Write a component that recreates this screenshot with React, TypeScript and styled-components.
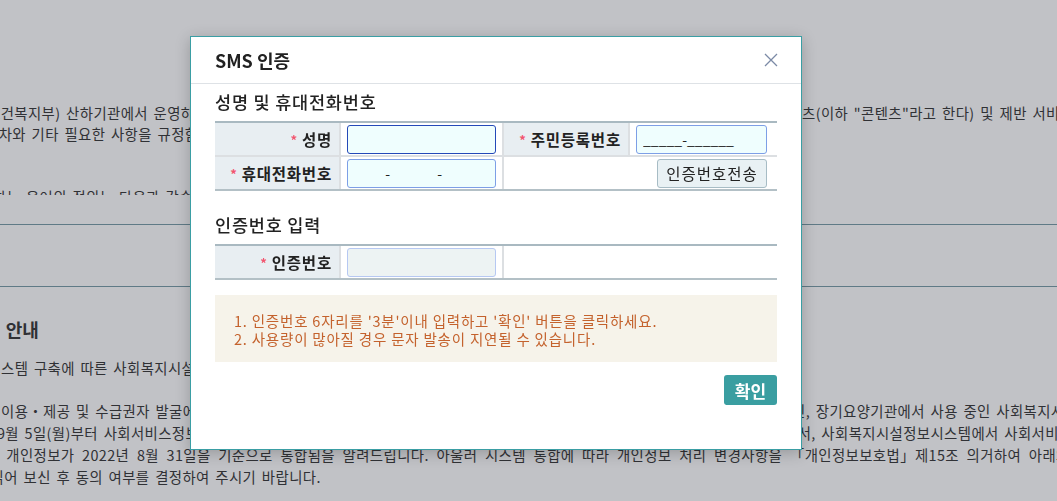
import React from 'react';
import styled, { createGlobalStyle } from 'styled-components';

const GlobalStyle = createGlobalStyle`
  html, body {
    margin: 0;
    padding: 0;
    height: 100%;
    overflow: hidden;
  }
  body {
    background: #c1c2c6;
    font-family: "Noto Sans CJK KR", "Noto Sans", sans-serif;
  }
  * {
    box-sizing: border-box;
  }
`;

/* ---------- page behind the dimmed overlay ---------- */

const Page = styled.div`
  margin-left: -141px;
  width: 1600px;
  color: #303135;
  font-size: 14.4px;
  letter-spacing: 0.4px;
  word-spacing: 2px;
`;

const TermsBox = styled.div`
  height: 195px;
  overflow: hidden;
  padding-top: 102px;
`;

const TermsLine = styled.p`
  margin: 0;
  line-height: 21px;
  white-space: nowrap;
`;

const AgreeBar = styled.div`
  margin-top: 29px;
  height: 63px;
  border-top: 1px solid #5f7a86;
  border-bottom: 1px solid #5f7a86;
`;

const NoticeHeading = styled.h3`
  margin: 29px 0 0;
  font-size: 18px;
  font-weight: 700;
  line-height: 26px;
  letter-spacing: 0;
  word-spacing: 3px;
  white-space: nowrap;
`;

const BodyLine = styled.p<{ $gap?: number; $wide?: boolean }>`
  margin: ${(p) => p.$gap ?? 0}px 0 0;
  line-height: 22px;
  white-space: nowrap;
  word-spacing: ${(p) => (p.$wide ? 4 : 2)}px;
`;

/* ---------- modal ---------- */

const Modal = styled.div`
  position: fixed;
  left: 190px;
  top: 36px;
  width: 612px;
  height: 414px;
  background: #ffffff;
  border: 1px solid #3a9ea4;
  box-shadow: 0 3px 14px rgba(0, 0, 0, 0.22);
  display: flex;
  flex-direction: column;
`;

const Header = styled.div`
  height: 47px;
  flex: none;
  display: flex;
  align-items: center;
  justify-content: space-between;
  padding: 0 23px 0 24px;
  border-bottom: 1px solid #dee2e6;
`;

const Title = styled.h2`
  margin: 0;
  font-size: 18px;
  font-weight: 700;
  color: #212121;
`;

const CloseButton = styled.button`
  width: 14px;
  height: 14px;
  padding: 0;
  border: 0;
  background: none;
  display: flex;
  cursor: pointer;
`;

const Body = styled.div`
  padding: 6px 24px 0 24px;
  display: flex;
  flex-direction: column;
`;

const SectionTitle = styled.h3<{ $top?: number }>`
  margin: ${(p) => p.$top ?? 0}px 0 7px;
  font-size: 17.5px;
  font-weight: 500;
  line-height: 24px;
  letter-spacing: 0.8px;
  color: #222222;
`;

const FormGrid = styled.div<{ $cols: string }>`
  display: grid;
  grid-template-columns: ${(p) => p.$cols};
  grid-auto-rows: 32px;
  gap: 2px;
  background: #dcdfe2;
  border-top: 2px solid #a9b9c1;
  border-bottom: 2px solid #b3c0c6;
`;

const LabelCell = styled.div`
  background: #e8eef2;
  display: flex;
  align-items: center;
  justify-content: flex-end;
  padding-right: 7px;
  font-size: 15.5px;
  font-weight: 600;
  letter-spacing: 0.8px;
  color: #222222;
`;

const Star = styled.span`
  color: #f2556f;
  font-size: 13px;
  margin-right: 4px;
`;

const FieldCell = styled.div<{ $span?: number; $end?: boolean }>`
  background: #ffffff;
  display: flex;
  align-items: center;
  justify-content: ${(p) => (p.$end ? 'flex-end' : 'flex-start')};
  padding: 0 ${(p) => (p.$end ? 10 : 6)}px 0 6px;
  grid-column: span ${(p) => p.$span ?? 1};
`;

type Tone = 'focus' | 'normal' | 'disabled';

const borderFor: Record<Tone, string> = {
  focus: '#2449b8',
  normal: '#7d9fe6',
  disabled: '#b6c8f2',
};

const TextInput = styled.input<{ $w: number; $tone: Tone }>`
  width: ${(p) => p.$w}px;
  height: 29px;
  padding: 0 6px;
  border: 1px solid ${(p) => borderFor[p.$tone]};
  border-radius: 3px;
  background: ${(p) => (p.$tone === 'disabled' ? '#edf3f3' : '#effefe')};
  font-family: inherit;
  font-size: 14px;
  color: #222222;
  outline: none;
  white-space: pre;
`;

const SendButton = styled.button`
  width: 110px;
  height: 29px;
  padding: 0;
  border: 1px solid #a7bcc5;
  border-radius: 3px;
  background: #e9f1f4;
  font-family: inherit;
  font-size: 15.5px;
  letter-spacing: 1px;
  color: #222222;
`;

const NoticeBox = styled.div`
  margin-top: 15px;
  background: #f6f3ea;
  padding: 17px 19px 14px;
  color: #c4622d;
  font-size: 14.5px;
  letter-spacing: 0.8px;
  line-height: 18px;
`;

const Footer = styled.div`
  margin-top: 13px;
  display: flex;
  justify-content: flex-end;
`;

const ConfirmButton = styled.button`
  width: 53px;
  height: 30px;
  padding: 0;
  border: 0;
  border-radius: 3px;
  background: #3a9ea1;
  color: #ffffff;
  font-family: inherit;
  font-size: 17px;
  font-weight: 700;
`;

const CloseIcon = () => (
  <svg width="14" height="14" viewBox="0 0 14 14" fill="none">
    <path d="M1 1 L13 13 M13 1 L1 13" stroke="#7b8aa6" strokeWidth="1.3" />
  </svg>
);

const phoneMask = ' '.repeat(10) + '-' + ' '.repeat(15) + '-';
const nb = '\u00a0';

export default function App() {
  return (
    <>
      <GlobalStyle />
      <Page>
        <TermsBox>
          <TermsLine>
            한국사회보장정보원(보건복지부) 산하기관에서 운영하는 사회복지시설정보시스템(이하 "시스템"이라 한다)에서 제공하는 모든 서비스 및 온라인상 콘텐츠(이하 "콘텐츠"라고 한다) 및 제반 서비스의 이용과 관련하여 회원과 기관의 권리
          </TermsLine>
          <TermsLine>서비스 이용조건 및 절차와 기타 필요한 사항을 규정함을 목적으로 합니다.</TermsLine>
          <TermsLine>&nbsp;</TermsLine>
          <TermsLine>&nbsp;</TermsLine>
          <TermsLine>본 이용약관에서 사용하는 용어의 정의는 다음과 같습니다.</TermsLine>
        </TermsBox>
        <AgreeBar />
        <NoticeHeading>개인정보 변경사항 안내</NoticeHeading>
        <BodyLine $gap={15}>
          차세대 사회보장정보시스템 구축에 따른 사회복지시설정보시스템 개인정보 처리 변경사항을 안내드립니다.
        </BodyLine>
        <BodyLine $gap={21}>
          사회복지서비스정보의 이용・제공 및 수급권자 발굴에 관한 업무를 효율화하기 위해 전국의 사회복지시설, 지역아동센터, 국공립어린이집, 사회복지법인, 장기요양기관에서 사용 중인 사회복지시설정보시스템이
        </BodyLine>
        <BodyLine>
          이에 정부는{nb} 2022년 9월 5일(월)부터 사회서비스정보시스템과 사회복지시설정보시스템이 차세대 사회보장정보시스템으로 다 통합되어 운영됨에 따라서, 사회복지시설정보시스템에서 사회서비스정보시스템으로
        </BodyLine>
        <BodyLine $wide>
          시스템 등록 회원의{nb}{nb} 개인정보가 2022년 8월 31일을 기준으로 통합됨을 알려드립니다. 아울러 시스템 통합에 따라 개인정보 처리 변경사항을 「개인정보보호법」제15조 의거하여 아래와 같이 안내드리오니
        </BodyLine>
        <BodyLine>
          아래 내용을 자세히{nb} 읽어 보신 후 동의 여부를 결정하여 주시기 바랍니다.
        </BodyLine>
      </Page>

      <Modal role="dialog" aria-label="SMS 인증">
        <Header>
          <Title>SMS 인증</Title>
          <CloseButton aria-label="닫기">
            <CloseIcon />
          </CloseButton>
        </Header>
        <Body>
          <SectionTitle>성명 및 휴대전화번호</SectionTitle>
          <FormGrid $cols="124px 161px 124px 1fr">
            <LabelCell>
              <Star>*</Star>성명
            </LabelCell>
            <FieldCell>
              <TextInput $w={149} $tone="focus" defaultValue="" />
            </FieldCell>
            <LabelCell>
              <Star>*</Star>주민등록번호
            </LabelCell>
            <FieldCell>
              <TextInput $w={131} $tone="normal" defaultValue="_____-______" />
            </FieldCell>
            <LabelCell>
              <Star>*</Star>휴대전화번호
            </LabelCell>
            <FieldCell>
              <TextInput $w={149} $tone="normal" defaultValue={phoneMask} />
            </FieldCell>
            <FieldCell $span={2} $end>
              <SendButton>인증번호전송</SendButton>
            </FieldCell>
          </FormGrid>

          <SectionTitle $top={22}>인증번호 입력</SectionTitle>
          <FormGrid $cols="124px 161px 1fr">
            <LabelCell>
              <Star>*</Star>인증번호
            </LabelCell>
            <FieldCell>
              <TextInput $w={149} $tone="disabled" disabled />
            </FieldCell>
            <FieldCell />
          </FormGrid>

          <NoticeBox>
            <div>1. 인증번호 6자리를 '3분'이내 입력하고 '확인' 버튼을 클릭하세요.</div>
            <div>2. 사용량이 많아질 경우 문자 발송이 지연될 수 있습니다.</div>
          </NoticeBox>

          <Footer>
            <ConfirmButton>확인</ConfirmButton>
          </Footer>
        </Body>
      </Modal>
    </>
  );
}
